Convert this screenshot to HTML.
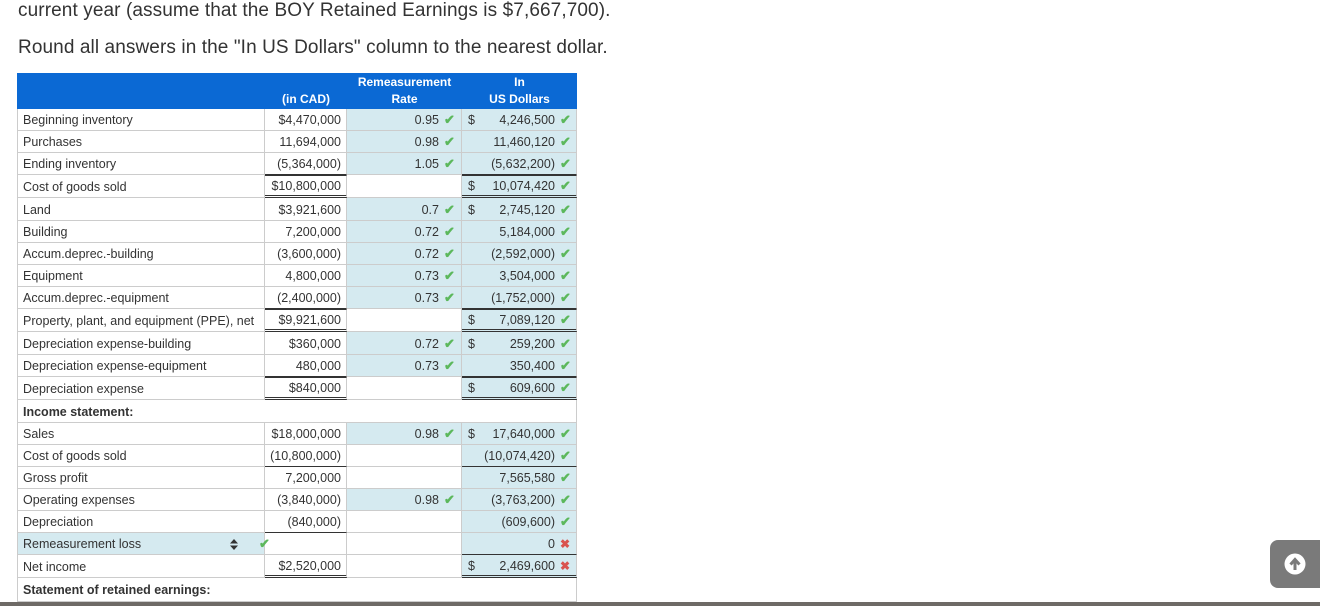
<!DOCTYPE html>
<html><head><meta charset="utf-8"><style>
body{margin:0;width:1320px;height:606px;overflow:hidden;background:#fff;font-family:"Liberation Sans",sans-serif;color:#333;position:relative}
.t{position:absolute;left:18px;font-size:19px;color:#333;white-space:nowrap;letter-spacing:0.1px}
.hd{position:absolute;left:17px;top:73px;width:560px;height:36px;background:#0b69d4;color:#fff;font-weight:bold;font-size:12px}
.hd div{position:absolute;text-align:center}
.r{position:absolute;left:17px;width:560px;font-size:12.5px}
.r>div{position:absolute;top:0;bottom:0;box-sizing:border-box;border-bottom:1px solid #ccc;display:flex;align-items:center;white-space:nowrap;padding-top:1px}
.a{left:0;width:248px;padding-left:5px;border-left:1px solid #ccc;border-right:1px solid #ccc}
.b{left:248px;width:82px;justify-content:flex-end;padding-right:5px;border-right:1px solid #ccc}
.c{left:330px;width:115px;justify-content:flex-end;padding-right:4px;border-right:1px solid #ccc}
.d{left:445px;width:115px;justify-content:flex-end;padding-right:3px;border-right:1px solid #ccc}
.bl{background:#d5eaf0}
.k{color:#5cb85c;font-size:13px;margin-left:5px;width:13px;font-weight:bold}
.x{color:#d9534f;font-size:12px;margin-left:5px;width:13px;font-weight:bold}
.s{position:absolute;left:6px}
.tot{border-top:1px solid #333!important;border-bottom:3px double #333!important}
.ul{border-bottom:1px solid #333!important}
.sec{font-weight:bold}
</style></head><body>
<div class="t" style="top:0px">current year (assume that the BOY Retained Earnings is $7,667,700).</div>
<div class="t" style="top:37px">Round all answers in the "In US Dollars" column to the nearest dollar.</div>
<div class="hd">
<div style="left:248px;width:82px;top:19px">(in CAD)</div>
<div style="left:330px;width:115px;top:2px">Remeasurement</div>
<div style="left:330px;width:115px;top:19px">Rate</div>
<div style="left:445px;width:115px;top:2px">In</div>
<div style="left:445px;width:115px;top:19px">US Dollars</div>
</div>

<div class="r" style="top:109px;height:22px"><div class="a">Beginning inventory</div><div class="b">$4,470,000</div><div class="c bl">0.95<span class="k">✔</span></div><div class="d bl"><span class="s">$</span>4,246,500<span class="k">✔</span></div></div>
<div class="r" style="top:131px;height:22px"><div class="a">Purchases</div><div class="b">11,694,000</div><div class="c bl">0.98<span class="k">✔</span></div><div class="d bl">11,460,120<span class="k">✔</span></div></div>
<div class="r" style="top:153px;height:22px"><div class="a">Ending inventory</div><div class="b ul">(5,364,000)</div><div class="c bl">1.05<span class="k">✔</span></div><div class="d bl ul">(5,632,200)<span class="k">✔</span></div></div>
<div class="r" style="top:175px;height:23px"><div class="a">Cost of goods sold</div><div class="b tot">$10,800,000</div><div class="c"></div><div class="d bl tot"><span class="s">$</span>10,074,420<span class="k">✔</span></div></div>
<div class="r" style="top:198px;height:23px"><div class="a">Land</div><div class="b">$3,921,600</div><div class="c bl">0.7<span class="k">✔</span></div><div class="d bl"><span class="s">$</span>2,745,120<span class="k">✔</span></div></div>
<div class="r" style="top:221px;height:22px"><div class="a">Building</div><div class="b">7,200,000</div><div class="c bl">0.72<span class="k">✔</span></div><div class="d bl">5,184,000<span class="k">✔</span></div></div>
<div class="r" style="top:243px;height:22px"><div class="a">Accum.deprec.-building</div><div class="b">(3,600,000)</div><div class="c bl">0.72<span class="k">✔</span></div><div class="d bl">(2,592,000)<span class="k">✔</span></div></div>
<div class="r" style="top:265px;height:22px"><div class="a">Equipment</div><div class="b">4,800,000</div><div class="c bl">0.73<span class="k">✔</span></div><div class="d bl">3,504,000<span class="k">✔</span></div></div>
<div class="r" style="top:287px;height:22px"><div class="a">Accum.deprec.-equipment</div><div class="b ul">(2,400,000)</div><div class="c bl">0.73<span class="k">✔</span></div><div class="d bl ul">(1,752,000)<span class="k">✔</span></div></div>
<div class="r" style="top:309px;height:23px"><div class="a">Property, plant, and equipment (PPE), net</div><div class="b tot">$9,921,600</div><div class="c"></div><div class="d bl tot"><span class="s">$</span>7,089,120<span class="k">✔</span></div></div>
<div class="r" style="top:332px;height:23px"><div class="a">Depreciation expense-building</div><div class="b">$360,000</div><div class="c bl">0.72<span class="k">✔</span></div><div class="d bl"><span class="s">$</span>259,200<span class="k">✔</span></div></div>
<div class="r" style="top:355px;height:22px"><div class="a">Depreciation expense-equipment</div><div class="b ul">480,000</div><div class="c bl">0.73<span class="k">✔</span></div><div class="d bl ul">350,400<span class="k">✔</span></div></div>
<div class="r" style="top:377px;height:23px"><div class="a">Depreciation expense</div><div class="b tot">$840,000</div><div class="c"></div><div class="d bl tot"><span class="s">$</span>609,600<span class="k">✔</span></div></div>
<div class="r" style="top:400px;height:23px"><div class="a sec" style="width:560px;border-right:1px solid #ccc">Income statement:</div></div>
<div class="r" style="top:423px;height:22px"><div class="a">Sales</div><div class="b">$18,000,000</div><div class="c bl">0.98<span class="k">✔</span></div><div class="d bl"><span class="s">$</span>17,640,000<span class="k">✔</span></div></div>
<div class="r" style="top:445px;height:22px"><div class="a">Cost of goods sold</div><div class="b ul">(10,800,000)</div><div class="c"></div><div class="d bl ul">(10,074,420)<span class="k">✔</span></div></div>
<div class="r" style="top:467px;height:22px"><div class="a">Gross profit</div><div class="b">7,200,000</div><div class="c"></div><div class="d bl">7,565,580<span class="k">✔</span></div></div>
<div class="r" style="top:489px;height:22px"><div class="a">Operating expenses</div><div class="b">(3,840,000)</div><div class="c bl">0.98<span class="k">✔</span></div><div class="d bl">(3,763,200)<span class="k">✔</span></div></div>
<div class="r" style="top:511px;height:22px"><div class="a">Depreciation</div><div class="b ul">(840,000)</div><div class="c"></div><div class="d bl">(609,600)<span class="k">✔</span></div></div>
<div class="r" style="top:533px;height:22px"><div class="a bl">Remeasurement loss<svg style="position:absolute;left:212px;top:6px" width="8" height="11" viewBox="0 0 8 11"><path d="M0 4.5L4 0L8 4.5ZM0 6.5L4 11L8 6.5Z" fill="#333"/></svg><span class="k" style="position:absolute;left:236px">✔</span></div><div class="b"></div><div class="c"></div><div class="d bl ul">0<span class="x">✖</span></div></div>
<div class="r" style="top:555px;height:23px"><div class="a">Net income</div><div class="b tot" style="border-top:none!important">$2,520,000</div><div class="c"></div><div class="d bl tot" style="border-top:none!important"><span class="s">$</span>2,469,600<span class="x">✖</span></div></div>
<div class="r" style="top:578px;height:24px"><div class="a sec" style="width:560px;border-right:1px solid #ccc">Statement of retained earnings:</div></div>

<div style="position:absolute;left:1270px;top:540px;width:50px;height:48px;background:#7a7a7a;border-radius:8px 0 0 8px"></div>
<svg style="position:absolute;left:1284px;top:553px" width="22" height="22" viewBox="0 0 22 22"><circle cx="11" cy="11" r="10.5" fill="#fff"/><path d="M11 17V7M6.5 11.5L11 6.5L15.5 11.5" stroke="#7a7a7a" stroke-width="3" fill="none"/></svg>
<div style="position:absolute;left:0;top:602px;width:1320px;height:4px;background:#6e6a66"></div>
</body></html>
